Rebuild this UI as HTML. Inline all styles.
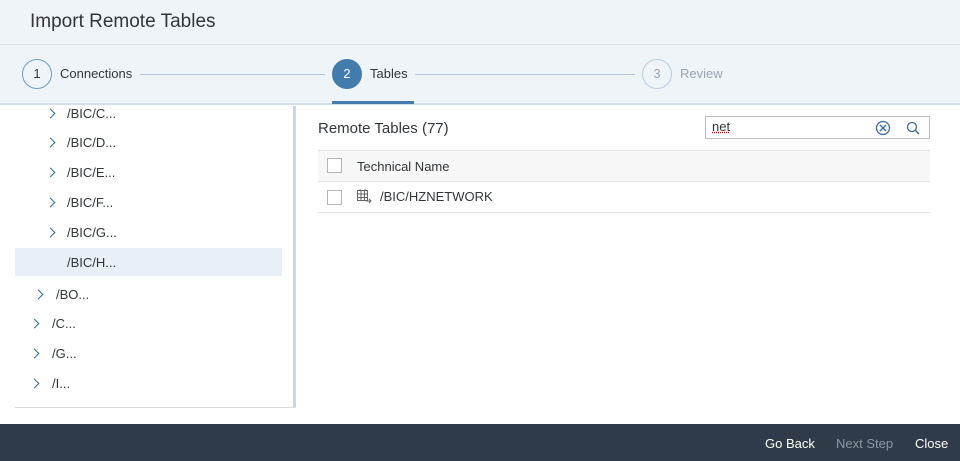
<!DOCTYPE html><html><head><style>
*{margin:0;padding:0;box-sizing:border-box}
body{width:960px;height:461px;background:#fff;font-family:"Liberation Sans",sans-serif;position:relative;overflow:hidden;color:#32363a}
.a{position:absolute}
.hd{left:0;top:0;width:960px;height:45px;background:#eff4f9;border-bottom:1px solid #d9e3ec;font-size:19px;padding:11px 0 0 30px;color:#32363a}
.st{left:0;top:45px;width:960px;height:60px;background:#eff4f9;border-bottom:2px solid #d3dfea}
.c{border-radius:50%;width:30px;height:30px;font-size:13px;text-align:center;line-height:28px;border:1px solid #6f9bc3;color:#32363a}
.lbl{font-size:13px}
.ln{height:1px;background:#b4c6d6}
.row{font-size:13px;color:#32363a}
.chev{width:7px;height:7px;border-right:1.6px solid #3b6a98;border-top:1.6px solid #3b6a98;transform:rotate(45deg)}
.cb{width:15px;height:15px;border:1px solid #b5b5b5;background:#fff}
.ft{left:0;top:424px;width:960px;height:37px;background:#2f3b48;font-size:13px}
</style></head><body>
<div class="a hd">Import Remote Tables</div>
<div class="a st">
 <div class="a c" style="left:22px;top:14px">1</div>
 <div class="a lbl" style="left:60px;top:21px">Connections</div>
 <div class="a ln" style="left:140px;top:29px;width:185px"></div>
 <div class="a c" style="left:332px;top:14px;background:#427cac;border-color:#427cac;color:#fff">2</div>
 <div class="a lbl" style="left:370px;top:21px">Tables</div>
 <div class="a" style="left:332px;top:56px;width:82px;height:3px;background:#427cac"></div>
 <div class="a ln" style="left:415px;top:29px;width:220px"></div>
 <div class="a c" style="left:642px;top:14px;border-color:#b8cde0;color:#9aa5b0">3</div>
 <div class="a lbl" style="left:680px;top:21px;color:#9aa5b0">Review</div>
</div>
<div class="a" style="left:15px;top:248px;width:267px;height:28px;background:#e8eff6"></div>
<div class="a" style="left:293px;top:106px;width:3px;height:302px;background:#c9d8e8"></div>
<div class="a" style="left:15px;top:407px;width:281px;height:1px;background:#dcdcdc"></div>
<div class="a chev" style="left:47px;top:110px"></div><div class="a row" style="left:67px;top:106px">/BIC/C...</div>
<div class="a chev" style="left:47px;top:139px"></div><div class="a row" style="left:67px;top:135px">/BIC/D...</div>
<div class="a chev" style="left:47px;top:169px"></div><div class="a row" style="left:67px;top:165px">/BIC/E...</div>
<div class="a chev" style="left:47px;top:199px"></div><div class="a row" style="left:67px;top:195px">/BIC/F...</div>
<div class="a chev" style="left:47px;top:229px"></div><div class="a row" style="left:67px;top:225px">/BIC/G...</div>
<div class="a row" style="left:67px;top:255px">/BIC/H...</div>
<div class="a chev" style="left:35px;top:291px"></div><div class="a row" style="left:56px;top:287px">/BO...</div>
<div class="a chev" style="left:31px;top:320px"></div><div class="a row" style="left:52px;top:316px">/C...</div>
<div class="a chev" style="left:31px;top:350px"></div><div class="a row" style="left:52px;top:346px">/G...</div>
<div class="a chev" style="left:31px;top:380px"></div><div class="a row" style="left:52px;top:376px">/I...</div>

<div class="a" style="left:318px;top:120px;font-size:15px">Remote Tables (77)</div>
<div class="a" style="left:705px;top:116px;width:225px;height:23px;border:1px solid #bfbfbf;background:#fff"></div>
<div class="a" style="left:712px;top:119px;font-size:13px;text-decoration:underline dotted #c00">net</div>
<svg class="a" style="left:875px;top:119px" width="50" height="18"><circle cx="8" cy="9" r="6.5" fill="none" stroke="#3b6a98" stroke-width="1.3"/><path d="M5 6l6 6M11 6l-6 6" stroke="#3b6a98" stroke-width="1.3"/><circle cx="37" cy="8" r="4.5" fill="none" stroke="#3b6a98" stroke-width="1.3"/><path d="M40 11l4 4" stroke="#3b6a98" stroke-width="1.4"/></svg>
<div class="a" style="left:318px;top:150px;width:612px;height:32px;background:#f7f7f7;border-top:1px solid #e5e5e5;border-bottom:1px solid #e5e5e5"></div>
<div class="a cb" style="left:327px;top:158px"></div>
<div class="a" style="left:357px;top:159px;font-size:13px">Technical Name</div>
<div class="a" style="left:318px;top:212px;width:612px;height:1px;background:#e5e5e5"></div>
<div class="a cb" style="left:327px;top:190px"></div>
<svg class="a" style="left:356px;top:188px" width="16" height="16"><path d="M1.5 2.5h10v10h-10zM1.5 6h10M1.5 9.5h10M5 2.5v10M8.5 2.5v10M4 1v2M9 1v2" fill="none" stroke="#666" stroke-width="1"/><path d="M10 13h5M13 11l2 2-2 2" fill="none" stroke="#666" stroke-width="1"/></svg>
<div class="a" style="left:380px;top:189px;font-size:13px">/BIC/HZNETWORK</div>

<div class="a ft">
 <div class="a" style="left:765px;top:12px;color:#fff">Go Back</div>
 <div class="a" style="left:836px;top:12px;color:#8d97a2">Next Step</div>
 <div class="a" style="left:915px;top:12px;color:#fff">Close</div>
</div>
</body></html>
